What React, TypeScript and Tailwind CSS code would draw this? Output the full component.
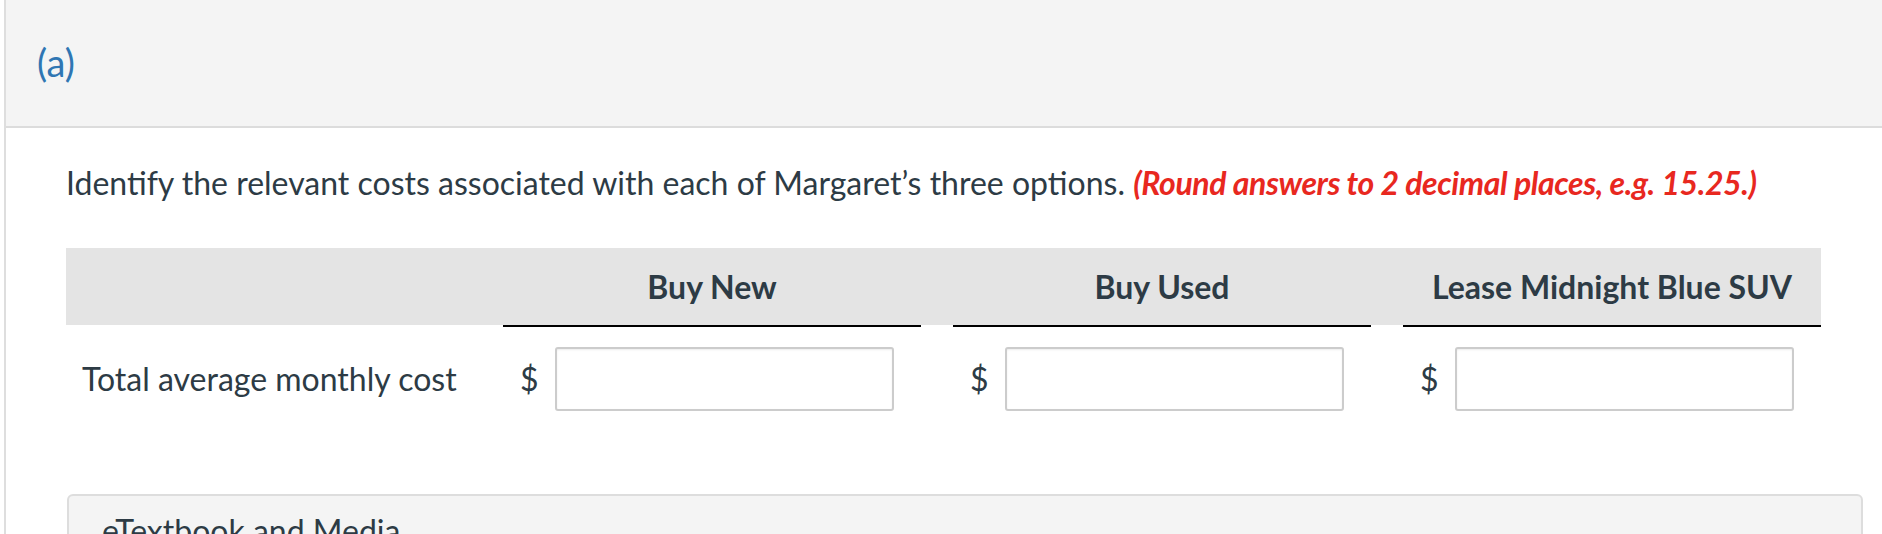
import { useState } from 'react'

const options = ['Buy New', 'Buy Used', 'Lease Midnight Blue SUV']

export default function App() {
  const [values, setValues] = useState<string[]>(['', '', ''])

  const handleChange = (i: number, v: string) => {
    setValues(prev => prev.map((old, j) => (j === i ? v : old)))
  }

  return (
    <div className="min-h-[534px] bg-white font-['Lato','Liberation_Sans',sans-serif] text-[#2d3b45]">
      <div className="ml-[4px] border-l-2 border-[#dedede] min-h-[534px]">
        {/* Part header */}
        <div className="h-[128px] bg-[#f4f4f4] border-b-2 border-[#dcdcdc] flex items-center pl-[31px]">
          <span className="text-[38px] leading-[1.2] text-[#2f76b3]">(a)</span>
        </div>

        {/* Question body */}
        <div className="pl-[60px] pr-[19px]">
          <p className="mt-[36px] text-[32px] leading-[1.2] whitespace-nowrap">
            Identify the relevant costs associated with each of Margaret’s three options.{' '}
            <span className="font-bold italic tracking-[-0.4px] text-[#e8281f]">(Round answers to 2 decimal places, e.g. 15.25.)</span>
          </p>

          {/* Answer table */}
          <div className="mt-[46px] w-[1755px]">
            <div className="grid grid-cols-[405px_418px_418px_418px] gap-x-8 h-[77px] bg-[#e4e4e4]">
              <div />
              {options.map(opt => (
                <div key={opt} className="flex items-center justify-center text-[32px] font-bold leading-[1.2]">
                  {opt}
                </div>
              ))}
            </div>
            <div className="grid grid-cols-[405px_418px_418px_418px] gap-x-8 h-[2px]">
              <div />
              <div className="bg-black" />
              <div className="bg-black" />
              <div className="bg-black" />
            </div>

            <div className="grid grid-cols-[405px_418px_418px_418px] gap-x-8 py-[20px]">
              <div className="flex items-center pl-4 text-[32px] leading-[1.2]">Total average monthly cost</div>
              {options.map((opt, i) => (
                <div key={opt} className="flex items-center pl-[17px] gap-[16px]">
                  <span className="text-[32px] leading-[1.2]">$</span>
                  <input
                    type="text"
                    value={values[i]}
                    onChange={e => handleChange(i, e.target.value)}
                    className="w-[339px] h-[64px] border-2 border-[#cccccc] rounded-[3px] bg-white px-3 text-[28px] outline-none shadow-[inset_0_1px_2px_rgba(0,0,0,0.08)]"
                  />
                </div>
              ))}
            </div>
          </div>

          {/* eTextbook panel */}
          <div className="mt-[63px] ml-[1px] border-2 border-[#dddddd] rounded-[6px] bg-[#f4f4f4] h-[120px] pl-[33px] pt-[16px]">
            <span className="text-[32px] leading-[1.2]">eTextbook and Media</span>
          </div>
        </div>
      </div>
    </div>
  )
}
